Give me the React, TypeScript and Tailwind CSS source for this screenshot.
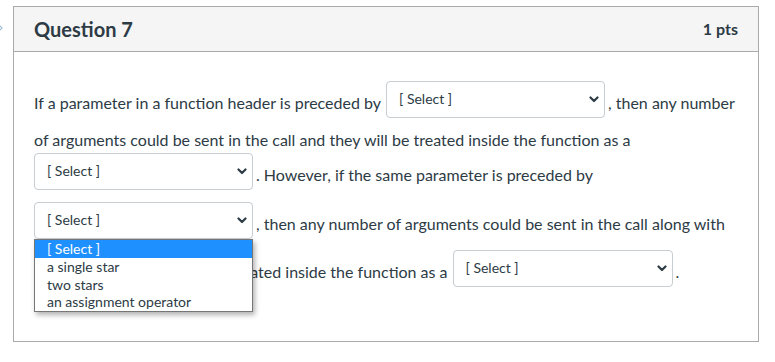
import React from "react";

const Chevron = () => (
  <svg width="10" height="7" viewBox="0 0 10 7" className="shrink-0">
    <path d="M1.5 1.5 L5 5 L8.5 1.5" fill="none" stroke="#2d3b45" strokeWidth="2.2" strokeLinecap="round" strokeLinejoin="round" />
  </svg>
);

const Select = ({ className = "" }: { className?: string }) => (
  <div
    className={`flex h-[37px] w-[219px] shrink-0 items-center justify-between rounded-[4px] border border-[#c7cdd1] bg-white pl-[12px] pr-[5px] ${className}`}
  >
    <span className="text-[14px] leading-[18px] text-[#2d3b45] -mt-[2px]">[ Select ]</span>
    <Chevron />
  </div>
);

export default function App() {
  return (
    <div className="relative h-[362px] w-[775px] overflow-hidden bg-white font-['Lato',sans-serif] text-[#2d3b45]">
      <svg className="absolute left-[-5px] top-[22px]" width="9" height="12" viewBox="0 0 9 12">
        <path d="M2 1 L7 6 L2 11" fill="none" stroke="#9fbdd6" strokeWidth="1.2" />
      </svg>
      <div className="ml-[13px] mt-[6px] h-[336px] w-[746px] border border-[#aaaaaa]">
        <div className="flex h-[45px] items-center justify-between border-b border-[#aaaaaa] bg-[#f5f5f5] pl-[20px] pr-[20px]">
          <span className="text-[20px] font-bold leading-[24px]">Question 7</span>
          <span className="text-[16px] font-bold leading-[20px]">1 pts</span>
        </div>
        <div className="pl-[20px] pt-[29px] text-[16px] leading-[24px]">
          <div className="flex items-center">
            <span className="pt-[6px]">If a parameter in a function header is preceded by</span>
            <Select className="ml-[5px]" />
            <span className="ml-[3px] pt-[6px]">, then any number</span>
          </div>
          <div className="mt-[10px]">
            of arguments could be sent in the call and they will be treated inside the function as a
          </div>
          <div className="mt-[1px] flex items-center">
            <Select />
            <span className="ml-[3px] pt-[6px]">. However, if the same parameter is preceded by</span>
          </div>
          <div className="mt-[12px] flex items-center">
            <div className="relative">
              <Select />
              <div className="absolute left-0 top-[37px] z-10 w-[219px] border border-[#767676] bg-white shadow-[2px_3px_5px_rgba(0,0,0,0.3)]">
                <div className="bg-[#1e90ff] pl-[12px] text-[14px] leading-[18px] text-white">[ Select ]</div>
                <div className="pl-[12px] text-[14px] leading-[17.5px] text-[#2d3b45]">a single star</div>
                <div className="pl-[12px] text-[14px] leading-[17.5px] text-[#2d3b45]">two stars</div>
                <div className="pl-[12px] text-[14px] leading-[18px] text-[#2d3b45]">an assignment operator</div>
              </div>
            </div>
            <span className="ml-[3px] pt-[6px]">, then any number of arguments could be sent in the call along with</span>
          </div>
          <div className="mt-[11px] flex items-center">
            <span className="pt-[6px]">keywords, and they shall be treated inside the function as a</span>
            <Select className="ml-[5px] w-[220px]" />
            <span className="ml-[3px] pt-[6px]">.</span>
          </div>
        </div>
      </div>
    </div>
  );
}
